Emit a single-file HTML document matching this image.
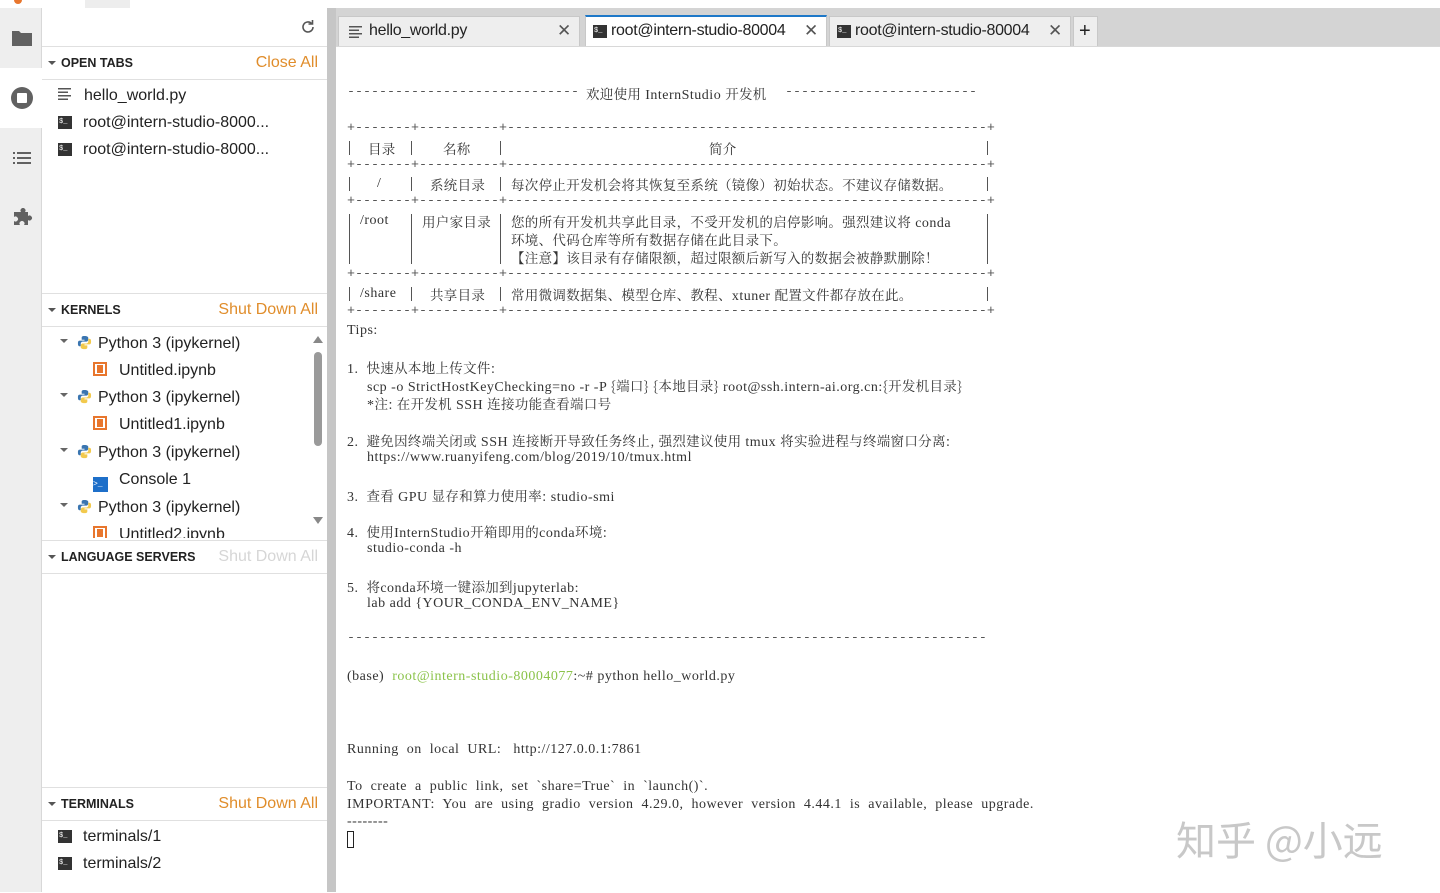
<!DOCTYPE html>
<html><head><meta charset="utf-8">
<style>
*{margin:0;padding:0;box-sizing:border-box}
body{width:1440px;height:892px;position:relative;overflow:hidden;background:#fff;font-family:"Liberation Sans","Noto Sans CJK SC",sans-serif;color:#222}
.abs{position:absolute}
#top{left:0;top:0;width:1440px;height:8px;background:#fff}
#rail{left:0;top:8px;width:42px;height:884px;background:#eeeeee;border-right:1px solid #d8d8d8}
#side{left:42px;top:8px;width:285px;height:884px;background:#fff}
#split{left:327px;top:8px;width:9px;height:884px;background:#c6c6c6}
#tabbar{left:336px;top:8px;width:1104px;height:38px;background:#d4d4d4}
.tab{position:absolute;top:8px;height:30px;background:#eeeeee;border:1px solid #c8c8c8;border-bottom:none;font-size:16px;line-height:28px;padding-left:30px;color:#222;letter-spacing:-0.3px}
.tab .x{position:absolute;right:8px;top:0;font-size:17px;color:#555}
.termic{display:inline-block;width:14px;height:13px;background:#333;color:#fff;font-size:7px;line-height:13px;text-align:left;padding-left:1px;font-family:"Liberation Mono",monospace;vertical-align:middle;letter-spacing:0}
.hdr{position:absolute;left:0;width:285px;height:34px;border-bottom:1px solid #e0e0e0;border-top:1px solid #e0e0e0;font-size:12.5px;font-weight:bold;line-height:32px;padding-left:19px;color:#222}
.hdr:before{content:"";position:absolute;left:6px;top:14px;border:4px solid transparent;border-top:4px solid #555}
.hdr .r{position:absolute;right:9px;top:0;font-weight:normal;font-size:16px;color:#e08d2b}
.item{position:absolute;font-size:16px;line-height:27px;color:#222;white-space:nowrap}
.py{display:inline-block;width:15px;height:15px;vertical-align:-2px;margin-right:6px}
.nb{display:inline-block;width:14px;height:14px;border:2px solid #e8762d;vertical-align:-1px;position:relative;margin-right:12px}
.nb:after{content:"";position:absolute;left:2px;top:1px;width:6px;height:8px;background:#e8762d}
.tw{position:absolute;left:0;white-space:pre;font-family:"Liberation Serif","Noto Serif CJK SC",serif;font-size:14px;letter-spacing:0.5px;line-height:18px;height:18px;color:#333}
.m{font-family:"Liberation Mono",monospace;font-size:13.33px;letter-spacing:0;color:#555}
.c{font-family:"Noto Serif CJK SC","Noto Sans CJK SC",serif;font-size:13.5px;letter-spacing:0.3px}
.b{position:absolute;width:1px;height:14px;background:#555}
#term{left:336px;top:46px;width:1104px;height:846px;background:#fff;border-top:1px solid #d8d8d8}
</style></head><body>
<div id="top" class="abs"><div class="abs" style="left:85px;top:0;width:45px;height:8px;background:#ededed"></div><div class="abs" style="left:14px;top:0;width:8px;height:4px;background:#e8762d;border-radius:0 0 4px 4px"></div></div>

<div id="rail" class="abs">
 <svg class="abs" style="left:12px;top:21px" width="20" height="17" viewBox="0 0 20 17"><path d="M0 2h7l2 2h11v13H0z" fill="#616161"/></svg>
 <div class="abs" style="left:0;top:60px;width:42px;height:60px;background:#fff"></div>
 <div class="abs" style="left:11px;top:79px;width:22px;height:22px;border-radius:50%;background:#616161"></div>
 <div class="abs" style="left:17px;top:85px;width:10px;height:10px;background:#fff;border-radius:1px"></div>
 <svg class="abs" style="left:13px;top:143px" width="18" height="15" viewBox="0 0 18 15"><g fill="#616161"><rect x="0" y="1" width="2" height="2"/><rect x="0" y="6" width="2" height="2"/><rect x="0" y="11" width="2" height="2"/><rect x="4" y="1" width="14" height="2"/><rect x="4" y="6" width="14" height="2"/><rect x="4" y="11" width="14" height="2"/></g></svg>
 <svg class="abs" style="left:12px;top:200px" width="21" height="21" viewBox="0 0 21 21"><path d="M6 4h3a2.5 2.5 0 1 1 4 0h3v4a2.5 2.5 0 1 1 0 4v5h-4a2.5 2.5 0 1 0-4 0H2v-4a2.5 2.5 0 1 0 0-4V4z" fill="#616161"/></svg>
</div>

<div id="side" class="abs">
 <svg class="abs" style="left:258px;top:11px" width="16" height="16" viewBox="0 0 16 16"><path d="M13 8a5 5 0 1 1-1.5-3.6" fill="none" stroke="#555" stroke-width="1.6"/><path d="M12.5 1v4h-4" fill="none" stroke="#555" stroke-width="1.6"/></svg>
 <div class="hdr" style="top:38px">OPEN TABS<span class="r">Close All</span></div>
 <div class="item" style="left:16px;top:74px"><svg width="15" height="13" style="vertical-align:-1px;margin-right:11px"><g fill="#555"><rect y="0" width="13" height="1.5"/><rect y="3.5" width="10" height="1.5"/><rect y="7" width="13" height="1.5"/><rect y="10.5" width="10" height="1.5"/></g></svg>hello_world.py</div>
 <div class="item" style="left:16px;top:101px"><span class="termic" style="margin-right:11px">$_</span>root@intern-studio-8000...</div>
 <div class="item" style="left:16px;top:128px"><span class="termic" style="margin-right:11px">$_</span>root@intern-studio-8000...</div>

 <div class="hdr" style="top:285px">KERNELS<span class="r">Shut Down All</span></div>
 <div class="abs" style="left:271px;top:324px;width:10px;height:206px">
  <div class="abs" style="left:0;top:4px;border:5px solid transparent;border-bottom:7px solid #888;border-top:none"></div>
  <div class="abs" style="left:1px;top:20px;width:8px;height:94px;background:#9a9a9a;border-radius:4px"></div>
  <div class="abs" style="left:0;top:185px;border:5px solid transparent;border-top:7px solid #888;border-bottom:none"></div>
 </div>
 <div class="abs" style="left:0;top:320px;width:270px;height:210px;overflow:hidden">
 <div class="item" style="left:18px;top:2px"><span style="display:inline-block;border:4px solid transparent;border-top:4px solid #666;vertical-align:1px;margin-right:9px"></span><svg class="py" viewBox="0 0 16 16"><path d="M8 1c-3 0-3 1-3 2v2h3v1H3c-2 0-2 2-2 3s0 3 2 3h1V9c0-1 1-2 2-2h4c1 0 2-1 2-2V3c0-1-1-2-4-2z" fill="#3a75b0"/><path d="M8 15c3 0 3-1 3-2v-2H8v-1h5c2 0 2-2 2-3s0-3-2-3h-1v3c0 1-1 2-2 2H6c-1 0-2 1-2 2v2c0 1 1 2 4 2z" fill="#f2c94c"/></svg>Python 3 (ipykernel)</div>
 <div class="item" style="left:51px;top:29px"><span class="nb"></span>Untitled.ipynb</div>
 <div class="item" style="left:18px;top:56px"><span style="display:inline-block;border:4px solid transparent;border-top:4px solid #666;vertical-align:1px;margin-right:9px"></span><svg class="py" viewBox="0 0 16 16"><path d="M8 1c-3 0-3 1-3 2v2h3v1H3c-2 0-2 2-2 3s0 3 2 3h1V9c0-1 1-2 2-2h4c1 0 2-1 2-2V3c0-1-1-2-4-2z" fill="#3a75b0"/><path d="M8 15c3 0 3-1 3-2v-2H8v-1h5c2 0 2-2 2-3s0-3-2-3h-1v3c0 1-1 2-2 2H6c-1 0-2 1-2 2v2c0 1 1 2 4 2z" fill="#f2c94c"/></svg>Python 3 (ipykernel)</div>
 <div class="item" style="left:51px;top:83px"><span class="nb"></span>Untitled1.ipynb</div>
 <div class="item" style="left:18px;top:111px"><span style="display:inline-block;border:4px solid transparent;border-top:4px solid #666;vertical-align:1px;margin-right:9px"></span><svg class="py" viewBox="0 0 16 16"><path d="M8 1c-3 0-3 1-3 2v2h3v1H3c-2 0-2 2-2 3s0 3 2 3h1V9c0-1 1-2 2-2h4c1 0 2-1 2-2V3c0-1-1-2-4-2z" fill="#3a75b0"/><path d="M8 15c3 0 3-1 3-2v-2H8v-1h5c2 0 2-2 2-3s0-3-2-3h-1v3c0 1-1 2-2 2H6c-1 0-2 1-2 2v2c0 1 1 2 4 2z" fill="#f2c94c"/></svg>Python 3 (ipykernel)</div>
 <div class="item" style="left:51px;top:138px"><span style="display:inline-block;width:15px;height:15px;background:#1e6fc9;color:#fff;font-size:8px;line-height:15px;vertical-align:-2px;margin-right:11px;font-family:'Liberation Mono',monospace">&gt;_</span>Console 1</div>
 <div class="item" style="left:18px;top:166px"><span style="display:inline-block;border:4px solid transparent;border-top:4px solid #666;vertical-align:1px;margin-right:9px"></span><svg class="py" viewBox="0 0 16 16"><path d="M8 1c-3 0-3 1-3 2v2h3v1H3c-2 0-2 2-2 3s0 3 2 3h1V9c0-1 1-2 2-2h4c1 0 2-1 2-2V3c0-1-1-2-4-2z" fill="#3a75b0"/><path d="M8 15c3 0 3-1 3-2v-2H8v-1h5c2 0 2-2 2-3s0-3-2-3h-1v3c0 1-1 2-2 2H6c-1 0-2 1-2 2v2c0 1 1 2 4 2z" fill="#f2c94c"/></svg>Python 3 (ipykernel)</div>
 <div class="item" style="left:51px;top:193px"><span class="nb"></span>Untitled2.ipynb</div>
 </div>
 <div class="hdr" style="top:532px">LANGUAGE SERVERS<span class="r" style="color:#d6d6d6">Shut Down All</span></div>

 <div class="hdr" style="top:779px">TERMINALS<span class="r">Shut Down All</span></div>
 <div class="item" style="left:16px;top:815px"><span class="termic" style="margin-right:11px">$_</span>terminals/1</div>
 <div class="item" style="left:16px;top:842px"><span class="termic" style="margin-right:11px">$_</span>terminals/2</div>
</div>

<div id="split" class="abs"></div>

<div id="tabbar" class="abs">
 <div class="tab" style="left:2px;width:242px"><svg class="abs" style="left:10px;top:9px" width="13" height="12"><g fill="#555"><rect y="0" width="13" height="1.5"/><rect y="3.5" width="10" height="1.5"/><rect y="7" width="13" height="1.5"/><rect y="10.5" width="10" height="1.5"/></g></svg>hello_world.py<span class="x">✕</span></div>
 <div class="tab" style="left:249px;width:242px;background:#fff;border-top:2px solid #1e78c8;top:7px;height:31px;padding-left:25px"><span class="termic" style="position:absolute;left:7px;top:8px">$_</span>root@intern-studio-80004<span class="x">✕</span></div>
 <div class="tab" style="left:493px;width:242px;padding-left:25px"><span class="termic" style="position:absolute;left:7px;top:8px">$_</span>root@intern-studio-80004<span class="x">✕</span></div>
 <div class="tab" style="left:737px;width:25px;padding-left:5px;font-size:20px">+</div>
</div>

<div id="term" class="abs">
<div class="abs" style="left:11px;top:0;width:760px;height:846px">
<div class="tw m" style="top:37px">-----------------------------</div>
<div class="tw" style="top:37px;left:239px"><span class="c">欢迎使用</span> InternStudio <span class="c">开发机</span></div>
<div class="tw m" style="top:37px;left:438px">------------------------</div>
<div class="tw m" style="top:73px">+-------+----------+------------------------------------------------------------+</div>
<div class="tw" style="top:92px;left:21px"><span class="c">目录</span></div>
<div class="tw" style="top:92px;left:96px"><span class="c">名称</span></div>
<div class="tw" style="top:92px;left:362px"><span class="c">简介</span></div>
<div class="tw m" style="top:110px">+-------+----------+------------------------------------------------------------+</div>
<div class="tw" style="top:128px;left:30px">/</div>
<div class="tw" style="top:128px;left:83px"><span class="c">系统目录</span></div>
<div class="tw" style="top:128px;left:164px"><span class="c">每次停止开发机会将其恢复至系统（镜像）初始状态。不建议存储数据。</span></div>
<div class="tw m" style="top:146px">+-------+----------+------------------------------------------------------------+</div>
<div class="tw" style="top:165px;left:13px">/root</div>
<div class="tw" style="top:165px;left:75px"><span class="c">用户家目录</span></div>
<div class="tw" style="top:165px;left:164px"><span class="c">您的所有开发机共享此目录，不受开发机的启停影响。强烈建议将</span> conda</div>
<div class="tw" style="top:183px;left:164px"><span class="c">环境、代码仓库等所有数据存储在此目录下。</span></div>
<div class="tw" style="top:201px;left:164px"><span class="c">【注意】该目录有存储限额，超过限额后新写入的数据会被静默删除！</span></div>
<div class="tw m" style="top:219px">+-------+----------+------------------------------------------------------------+</div>
<div class="tw" style="top:238px;left:13px">/share</div>
<div class="tw" style="top:238px;left:83px"><span class="c">共享目录</span></div>
<div class="tw" style="top:238px;left:164px"><span class="c">常用微调数据集、模型仓库、教程、</span>xtuner <span class="c">配置文件都存放在此。</span></div>
<div class="tw m" style="top:256px">+-------+----------+------------------------------------------------------------+</div>
<div class="b" style="left:2px;top:94px"></div><div class="b" style="left:64px;top:94px"></div><div class="b" style="left:153px;top:94px"></div><div class="b" style="left:640px;top:94px"></div>
<div class="b" style="left:2px;top:130px"></div><div class="b" style="left:64px;top:130px"></div><div class="b" style="left:153px;top:130px"></div><div class="b" style="left:640px;top:130px"></div>
<div class="b" style="left:2px;top:167px;height:50px"></div><div class="b" style="left:64px;top:167px;height:50px"></div><div class="b" style="left:153px;top:167px;height:50px"></div><div class="b" style="left:640px;top:167px;height:50px"></div>
<div class="b" style="left:2px;top:240px"></div><div class="b" style="left:64px;top:240px"></div><div class="b" style="left:153px;top:240px"></div><div class="b" style="left:640px;top:240px"></div>
<div class="tw" style="top:275px">Tips:</div>
<div class="tw" style="top:311px">1.  <span class="c">快速从本地上传文件:</span></div>
<div class="tw" style="top:329px;left:20px">scp -o StrictHostKeyChecking=no -r -P <span class="c">{端口}</span> <span class="c">{本地目录}</span> root@ssh.intern-ai.org.cn:<span class="c">{开发机目录}</span></div>
<div class="tw" style="top:347px;left:20px">*<span class="c">注: 在开发机</span> SSH <span class="c">连接功能查看端口号</span></div>
<div class="tw" style="top:384px">2.  <span class="c">避免因终端关闭或</span> SSH <span class="c">连接断开导致任务终止, 强烈建议使用</span> tmux <span class="c">将实验进程与终端窗口分离:</span></div>
<div class="tw" style="top:402px;left:20px">https://www.ruanyifeng.com/blog/2019/10/tmux.html</div>
<div class="tw" style="top:439px">3.  <span class="c">查看</span> GPU <span class="c">显存和算力使用率:</span> studio-smi</div>
<div class="tw" style="top:475px">4.  <span class="c">使用</span>InternStudio<span class="c">开箱即用的</span>conda<span class="c">环境:</span></div>
<div class="tw" style="top:493px;left:20px">studio-conda -h</div>
<div class="tw" style="top:530px">5.  <span class="c">将</span>conda<span class="c">环境一键添加到</span>jupyterlab:</div>
<div class="tw" style="top:548px;left:20px">lab add {YOUR_CONDA_ENV_NAME}</div>
<div class="tw m" style="top:583px">--------------------------------------------------------------------------------</div>
<div class="tw" style="top:621px">(base)  <span style="color:#8bc34a">root@intern-studio-80004077</span>:~# python hello_world.py</div>
<div class="tw" style="top:694px">Running  on  local  URL:   http://127.0.0.1:7861</div>
<div class="tw" style="top:731px">To  create  a  public  link,  set  `share=True`  in  `launch()`.</div>
<div class="tw" style="top:749px">IMPORTANT:  You  are  using  gradio  version  4.29.0,  however  version  4.44.1  is  available,  please  upgrade.</div>
<div class="tw" style="top:766px">--------</div>
<div class="abs" style="left:0;top:784px;width:7px;height:17px;border:1px solid #222"></div>
</div>
<div class="abs" style="left:840px;top:762px;font-family:'Noto Sans CJK SC',sans-serif;font-size:40px;color:#c8c8c8;white-space:nowrap">知乎 @小远</div>
</div>
</body></html>
